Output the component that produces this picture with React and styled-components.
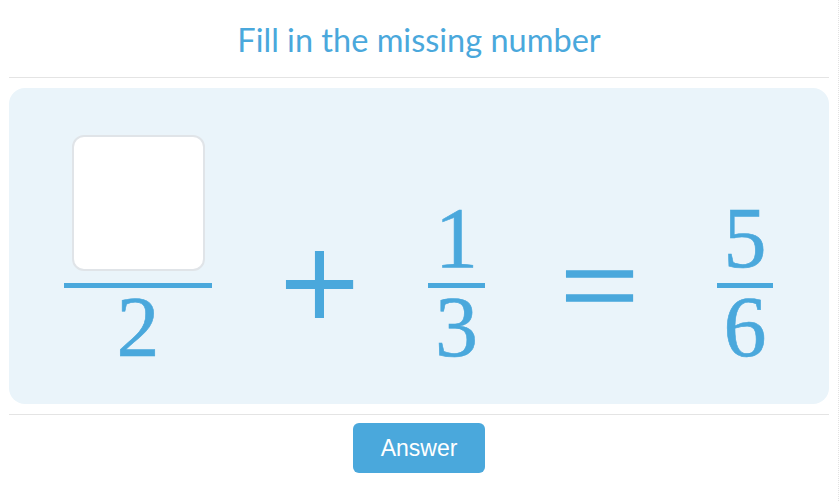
import React from "react";
import styled, { createGlobalStyle } from "styled-components";

const GlobalStyle = createGlobalStyle`
  html, body {
    margin: 0;
    padding: 0;
    background: #ffffff;
  }
`;

const Page = styled.div`
  width: 839px;
  height: 501px;
  box-sizing: border-box;
  border-right: 1px dotted #e2e2e2;
  padding-left: 9px;
  overflow: hidden;
`;

const Quiz = styled.div`
  width: 820px;
  display: flex;
  flex-direction: column;
  align-items: center;
`;

const Header = styled.div`
  width: 100%;
  height: 77px;
  display: flex;
  align-items: center;
  justify-content: center;
  border-bottom: 1px solid #e4e4e4;
`;

const Title = styled.h1`
  margin: 0;
  padding-top: 1px;
  font-family: "Lato", "Noto Sans", sans-serif;
  font-weight: 400;
  font-size: 32.5px;
  color: #4aa8dc;
`;

const Board = styled.div`
  width: 100%;
  height: 316px;
  box-sizing: border-box;
  margin-top: 10px;
  padding: 47px 0 0 55px;
  background: #eaf4fa;
  border-radius: 16px;
`;

const Equation = styled.div`
  display: flex;
  align-items: flex-end;
`;

const Fraction = styled.div`
  display: flex;
  flex-direction: column;
  align-items: center;
  width: ${(p) => p.$width}px;
`;

const Digit = styled.span`
  display: block;
  font-family: "Liberation Serif", "Times New Roman", serif;
  font-size: 86px;
  line-height: 64px;
  height: 64px;
  color: #4aa8dc;
  -webkit-text-stroke: 0.6px #4aa8dc;
`;

const Numerator = styled(Digit)`
  margin-bottom: 13px;
`;

const Denominator = styled(Digit)`
  margin-top: 7px;
`;

const Bar = styled.div`
  width: 100%;
  height: 5px;
  background: #4aa8dc;
`;

const AnswerBox = styled.input`
  width: 133px;
  height: 136px;
  box-sizing: border-box;
  margin: 0 0 12px;
  padding: 0;
  border: 2px solid #e0e4e8;
  border-radius: 12px;
  background: #ffffff;
  outline: none;
  text-align: center;
  font-family: "Liberation Serif", serif;
  font-size: 86px;
  color: #4aa8dc;
`;

const Operator = styled.span`
  display: block;
  font-family: "Liberation Serif", "Times New Roman", serif;
  font-size: 140px;
  line-height: 1;
  color: #4aa8dc;
  -webkit-text-stroke: 2px #4aa8dc;
  transform: scaleY(${(p) => p.$squash || 1});
  margin: 0 ${(p) => p.$right}px ${(p) => p.$lift}px ${(p) => p.$left}px;
`;

const Footer = styled.div`
  width: 100%;
  margin-top: 10px;
  padding-top: 8px;
  border-top: 1px solid #e4e4e4;
  display: flex;
  justify-content: center;
`;

const AnswerButton = styled.button`
  width: 132px;
  height: 50px;
  border: none;
  border-radius: 6px;
  background: #4aa8dc;
  color: #ffffff;
  font-family: "Liberation Sans", Arial, sans-serif;
  font-size: 23px;
  cursor: pointer;
`;

export default function App() {
  return (
    <>
      <GlobalStyle />
      <Page>
        <Quiz>
          <Header>
            <Title>Fill in the missing number</Title>
          </Header>
          <Board>
            <Equation>
              <Fraction $width={148}>
                <AnswerBox type="text" />
                <Bar />
                <Denominator>2</Denominator>
              </Fraction>
              <Operator $left={68} $right={69} $lift={5}>+</Operator>
              <Fraction $width={57}>
                <Numerator>1</Numerator>
                <Bar />
                <Denominator>3</Denominator>
              </Fraction>
              <Operator $left={75} $right={78} $lift={3} $squash={0.85}>=</Operator>
              <Fraction $width={56}>
                <Numerator>5</Numerator>
                <Bar />
                <Denominator>6</Denominator>
              </Fraction>
            </Equation>
          </Board>
          <Footer>
            <AnswerButton>Answer</AnswerButton>
          </Footer>
        </Quiz>
      </Page>
    </>
  );
}
